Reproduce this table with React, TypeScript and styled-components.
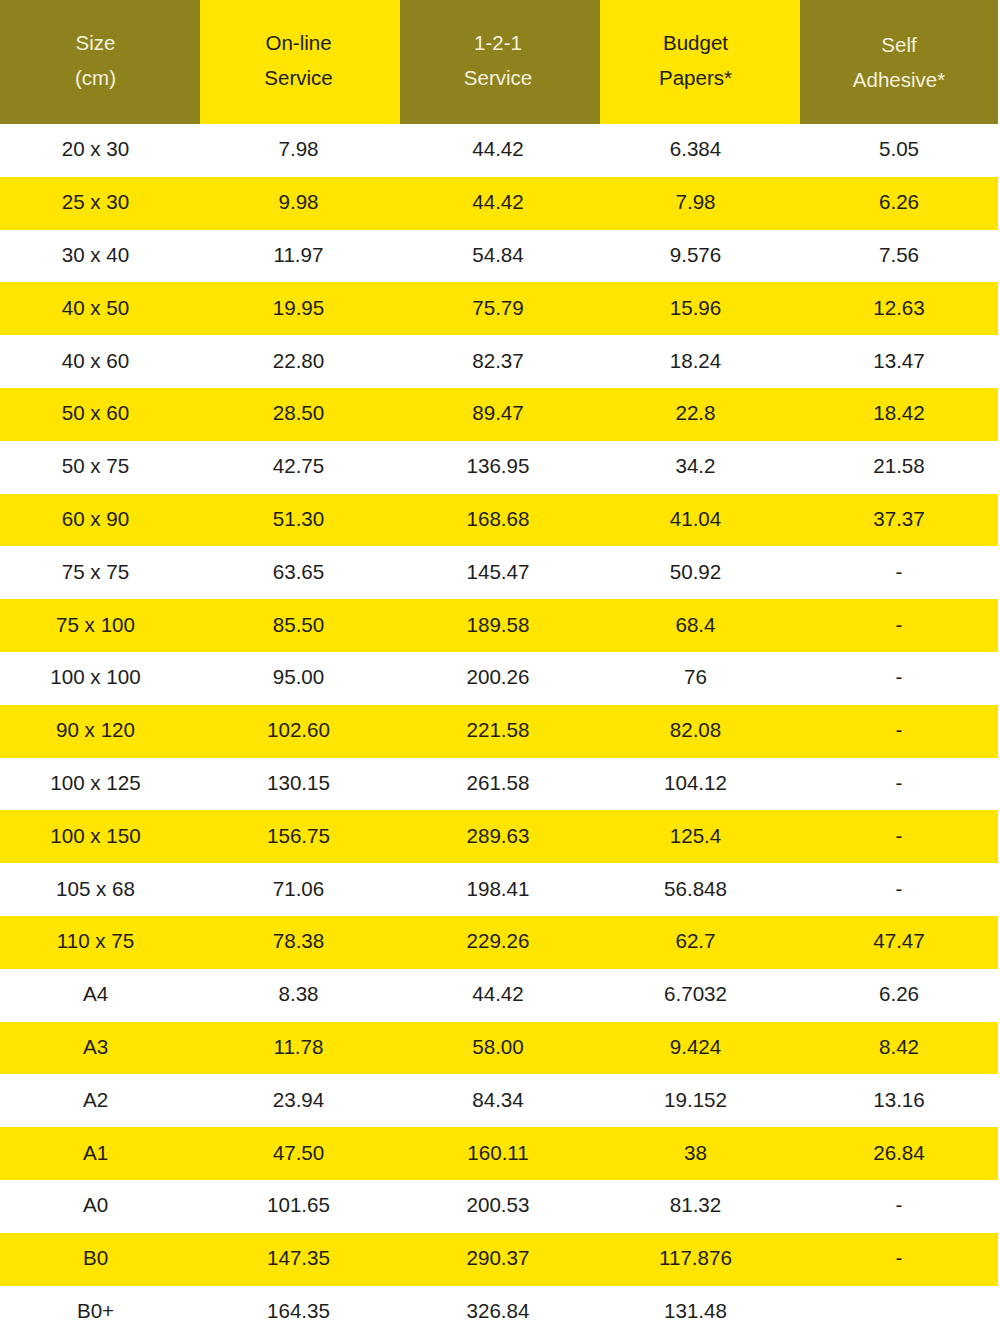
import React from "react";
import styled, { createGlobalStyle } from "styled-components";

const GlobalStyle = createGlobalStyle`
  html, body {
    margin: 0;
    padding: 0;
    background: #fff;
  }
  body {
    font-family: "Liberation Sans", Arial, sans-serif;
  }
`;

const OLIVE = "#8e821e";
const YELLOW = "#ffe500";

// the source columns are not quite centred: a little right padding per column
const colShift = [9, 3, 4, 9, 0];

const Table = styled.div`
  width: 998px;
  display: flex;
  flex-direction: column;
`;

const Row = styled.div<{ $striped?: boolean }>`
  display: grid;
  grid-template-columns: 200px 200px 200px 200px 198px;
  height: 52.8px;
  background: ${p => (p.$striped ? YELLOW : "#fff")};
`;

const HeaderRow = styled.div`
  display: grid;
  grid-template-columns: 200px 200px 200px 200px 198px;
  height: 124px;
`;

const HeadCell = styled.div<{ $dark?: boolean; $drop?: number; $shift: number }>`
  display: flex;
  flex-direction: column;
  align-items: center;
  justify-content: center;
  padding-top: ${p => p.$drop || 0}px;
  padding-bottom: 4px;
  padding-right: ${p => p.$shift}px;
  background: ${p => (p.$dark ? OLIVE : YELLOW)};
  color: ${p => (p.$dark ? "#f4f0dc" : "#1d1d1d")};
  font-size: 20.5px;
  line-height: 35px;
`;

const Cell = styled.div<{ $shift: number }>`
  display: flex;
  align-items: center;
  justify-content: center;
  padding-bottom: 2px;
  padding-right: ${p => p.$shift}px;
  color: #1e1e1e;
  font-size: 20.6px;
`;

const headers: { lines: string[]; dark: boolean; drop?: number }[] = [
  { lines: ["Size", "(cm)"], dark: true },
  { lines: ["On-line", "Service"], dark: false },
  { lines: ["1-2-1", "Service"], dark: true },
  { lines: ["Budget", "Papers*"], dark: false },
  { lines: ["Self", "Adhesive*"], dark: true, drop: 4 },
];

const rows: string[][] = [
  ["20 x 30", "7.98", "44.42", "6.384", "5.05"],
  ["25 x 30", "9.98", "44.42", "7.98", "6.26"],
  ["30 x 40", "11.97", "54.84", "9.576", "7.56"],
  ["40 x 50", "19.95", "75.79", "15.96", "12.63"],
  ["40 x 60", "22.80", "82.37", "18.24", "13.47"],
  ["50 x 60", "28.50", "89.47", "22.8", "18.42"],
  ["50 x 75", "42.75", "136.95", "34.2", "21.58"],
  ["60 x 90", "51.30", "168.68", "41.04", "37.37"],
  ["75 x 75", "63.65", "145.47", "50.92", "-"],
  ["75 x 100", "85.50", "189.58", "68.4", "-"],
  ["100 x 100", "95.00", "200.26", "76", "-"],
  ["90 x 120", "102.60", "221.58", "82.08", "-"],
  ["100 x 125", "130.15", "261.58", "104.12", "-"],
  ["100 x 150", "156.75", "289.63", "125.4", "-"],
  ["105 x 68", "71.06", "198.41", "56.848", "-"],
  ["110 x 75", "78.38", "229.26", "62.7", "47.47"],
  ["A4", "8.38", "44.42", "6.7032", "6.26"],
  ["A3", "11.78", "58.00", "9.424", "8.42"],
  ["A2", "23.94", "84.34", "19.152", "13.16"],
  ["A1", "47.50", "160.11", "38", "26.84"],
  ["A0", "101.65", "200.53", "81.32", "-"],
  ["B0", "147.35", "290.37", "117.876", "-"],
  ["B0+", "164.35", "326.84", "131.48", ""],
];

export default function App() {
  return (
    <>
      <GlobalStyle />
      <Table>
        <HeaderRow>
          {headers.map((h, i) => (
            <HeadCell key={i} $dark={h.dark} $drop={h.drop} $shift={colShift[i]}>
              {h.lines.map(l => (
                <span key={l}>{l}</span>
              ))}
            </HeadCell>
          ))}
        </HeaderRow>
        {rows.map((r, i) => (
          <Row key={i} $striped={i % 2 === 1}>
            {r.map((c, j) => (
              <Cell key={j} $shift={colShift[j]}>{c}</Cell>
            ))}
          </Row>
        ))}
      </Table>
    </>
  );
}
